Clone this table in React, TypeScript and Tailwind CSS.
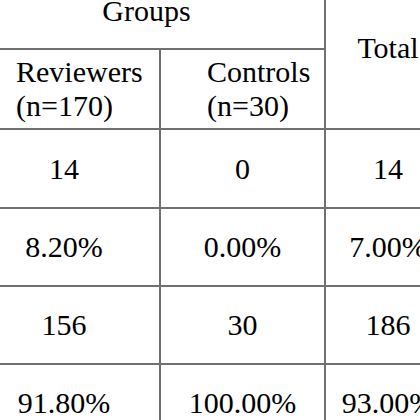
const cell =
  "flex items-center justify-center border-r-2 border-b-2 border-[#707070] font-['Liberation_Serif'] text-[30px] leading-none text-black";

const stack =
  "flex flex-col justify-center border-r-2 border-b-2 border-[#707070] font-['Liberation_Serif'] text-[30px] leading-[34px] text-black";

const rows = [
  ["14", "0", "14"],
  ["8.20%", "0.00%", "7.00%"],
  ["156", "30", "186"],
  ["91.80%", "100.00%", "93.00%"],
];

const App = () => {
  return (
    <div className="h-[420px] w-[420px] overflow-hidden bg-white">
      <div className="-mt-[32px] ml-[-31px] grid w-[483px] grid-cols-[192px_165px_126px] grid-rows-[82px_80px_79px_78px_78px_78px]">
        <div className={`${cell} col-span-2 pt-[6px]`}>Groups</div>
        <div className={`${cell} row-span-2`}>Total</div>
        <div className={`${stack} pl-[47px]`}>
          <span>Reviewers</span>
          <span>(n=170)</span>
        </div>
        <div className={`${stack} pl-[46px]`}>
          <span>Controls</span>
          <span>(n=30)</span>
        </div>
        {rows.map((row, idx) =>
          row.map((value, col) => (
            <div key={`${idx}-${col}`} className={cell}>
              {value}
            </div>
          ))
        )}
      </div>
    </div>
  );
};

export default App;
